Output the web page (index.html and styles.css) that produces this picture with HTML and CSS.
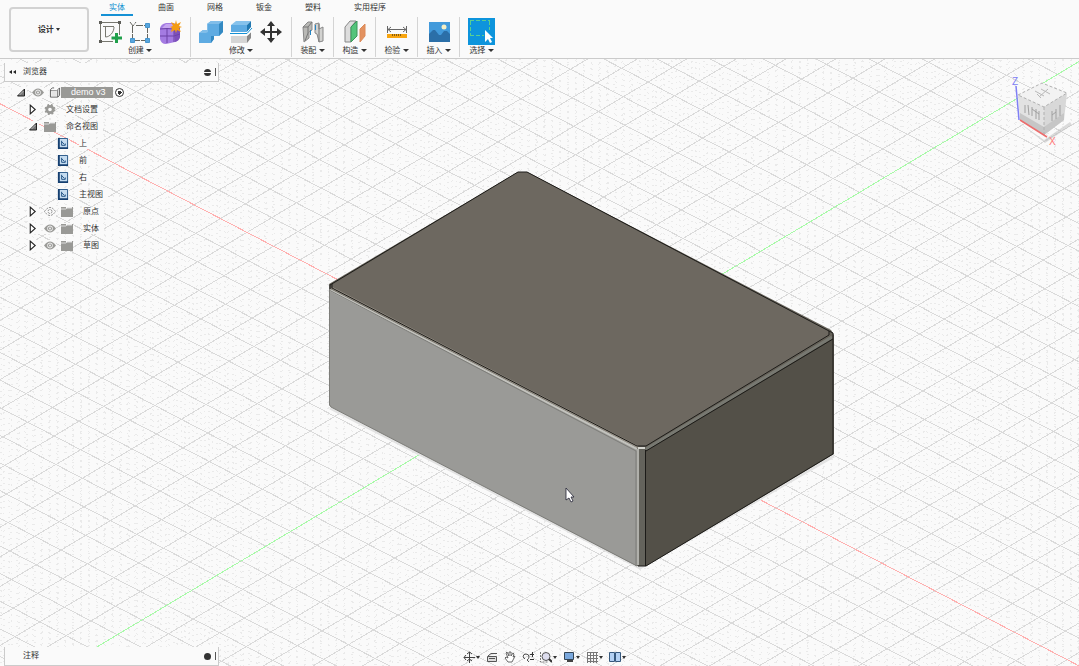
FILE: index.html
```html
<!DOCTYPE html>
<html lang="zh-CN">
<head>
    <meta charset="UTF-8">
    <meta name="viewport" content="width=device-width, initial-scale=1.0">
    <title>demo v3</title>
    <link rel="stylesheet" href="styles.css">
</head>
<body>

    <svg class="defs" width="0" height="0" aria-hidden="true">
        <symbol id="eye" viewBox="0 0 12 10">
            <path d="M0 5Q6-3 12 5Q6 13 0 5Z" fill="#9b9b98"/>
            <circle cx="6" cy="5" r="2.5" fill="none" stroke="#eee"/>
            <circle cx="6" cy="5" r="1" fill="#eee"/>
        </symbol>
        <symbol id="eye-off" viewBox="0 0 12 10">
            <path d="M.5 5Q6-3 11.500 5Q6 13 .5 5Z" fill="none" stroke="#8c8c8c" stroke-dasharray="2 1"/>
            <circle cx="6" cy="5" r="2" fill="none" stroke="#8c8c8c" stroke-dasharray="2 1"/>
        </symbol>
        <symbol id="folder" viewBox="0 0 12 11">
            <path d="M0 1H5V2H11V1H12V11H0Z" fill="#999996"/>
            <path d="M0 3H5L6 2H11" fill="none" stroke="#ddd"/>
        </symbol>
        <symbol id="closed" viewBox="0 0 8 10">
            <path d="M1.500 1V9L6 5Z" fill="#fff" stroke="#222"/>
        </symbol>
        <symbol id="open" viewBox="0 0 11 11">
            <path d="M9 2V9H2Z" fill="#777" stroke="#222"/>
            <path d="M4 8L8 4" stroke="#bbb"/>
        </symbol>
        <symbol id="view" viewBox="0 0 11 12">
            <path d="M.5 .5H10.500V11.500H.5Z" fill="#c5dcf0" stroke="#1d4d80"/>
            <path d="M1 0V12M0 11H11" stroke="#153f70" stroke-width="2"/>
            <path d="M4 3V8H8V6M4 4L7 7" fill="none" stroke="#1d4d80"/>
        </symbol>
    </svg>

    <header class="toolbar">
        <button class="workspace">设计 <i class="arrow"></i></button>
        <div class="ribbon">
            <nav class="tabs">
                <a href="#solid" class="active">实体</a>
                <a href="#surface">曲面</a>
                <a href="#mesh">网格</a>
                <a href="#sheet">钣金</a>
                <a href="#plastic">塑料</a>
                <a href="#utility">实用程序</a>
            </nav>
            <div class="groups">
                <div class="group">
                    <div class="tools">
                        <button aria-label="草图">
                            <svg viewBox="0 0 24 24">
                                <path d="M3 2.500H20M2.500 3V20M21.500 3V15M3 21.500H15" stroke="#77776f" fill="none"/>
                                <path d="M5 6.500H16M7.500 7V17C12 17 16 12 16 7" stroke="#77776f" fill="none"/>
                                <path d="M1 1H4V4H1ZM20 1H23V4H20ZM1 20H4V23H1Z" fill="#5d5d58"/>
                                <path d="M18.500 13V23M13.500 18H24" stroke="#20a04b" stroke-width="3"/>
                            </svg>
                        </button>
                        <button aria-label="创建形状">
                            <svg viewBox="0 0 24 24">
                                <path d="M2 2L5 6L8 2M4.500 6V20M8 5.500H18M19.500 6V19M5 20.500H19" stroke="#666660" fill="none" stroke-dasharray="7 1"/>
                                <path d="M17.500 3.500H21.500V7.500H17.500ZM2.500 18.500H6.500V22.500H2.500ZM17.500 18.500H21.500V22.500H17.500Z" fill="#57a6df" stroke="#4795cd"/>
                            </svg>
                        </button>
                        <button aria-label="创建造型">
                            <svg viewBox="0 0 24 24">
                                <path d="M2 8Q3 4 8 3H16L22 8V17Q21 21 17 22L8 24Q3 24 2 19Z" fill="#a47be2"/>
                                <path d="M16 10L22 7V17Q21 21 17 22Z" fill="#7c4fba"/>
                                <path d="M4 8L8 4H15L16 9Z" fill="#c6a5f0"/>
                                <path d="M2 9Q9 8 16 9M9 8V23M16 9V22M2 16H16L22 14" stroke="#6c42a6" fill="none"/>
                                <path d="M18 0L19 4L23 2L21 6L24 7L21 8L23 12L19 10L18 13L17 10L13 12L14 8L12 7L15 6L13 2L17 4Z" fill="#f39b12"/>
                            </svg>
                        </button>
                    </div>
                    <button class="menu">创建 <i class="arrow"></i></button>
                </div>
                <div class="group">
                    <div class="tools">
                        <button aria-label="拉伸">
                            <svg viewBox="0 0 24 24">
                                <path d="M0 13L4 10H8V4L12 1H24V12L20 16H15V19L12 23H0Z" fill="#5eabe2"/>
                                <path d="M0 13L4 10H8V4L12 1H24L20 4H9V12L7 13Z" fill="#80bde9"/>
                                <path d="M24 1V12L20 16V4ZM15 16V19L12 23V16Z" fill="#3389c2"/>
                            </svg>
                        </button>
                        <button aria-label="偏移面">
                            <svg viewBox="0 0 24 24">
                                <path d="M2 5L7 1H22L18 5Z" fill="#86c2ec"/>
                                <path d="M2 5H18V12H2Z" fill="#5eabe2"/>
                                <path d="M18 5L22 1V7L18 12Z" fill="#2178b0"/>
                                <path d="M2 16H18V23H2Z" fill="#d5d5d5"/>
                                <path d="M18 16L22 12V18L18 23Z" fill="#888"/>
                                <path d="M1 14H18L23 9" stroke="#fff" stroke-width="3" fill="none"/>
                                <path d="M1 13.500H18L23 8" stroke="#1591d5" fill="none"/>
                            </svg>
                        </button>
                        <button aria-label="移动">
                            <svg viewBox="0 0 24 24">
                                <path d="M12 3V21M3 12H21" stroke="#333" stroke-width="2"/>
                                <path d="M12 1L16 6H8ZM12 23L8 18H16ZM1 12L6 8V16ZM23 12L18 16V8Z" fill="#333"/>
                            </svg>
                        </button>
                    </div>
                    <button class="menu">修改 <i class="arrow"></i></button>
                </div>
                <div class="group single">
                    <div class="tools">
                        <button aria-label="联接">
                            <svg viewBox="0 0 24 24">
                                <path d="M2 7L7 2H11V10L8 12V18L3 22Z" fill="#b9b9b6" stroke="#888"/>
                                <path d="M14 4L18 3V9L22 7V21L18 22L16 14L14 13Z" fill="#d2d2d0" stroke="#888"/>
                                <path d="M2 7H7V13L4 21M7 7L11 2M18 4V22" fill="none" stroke="#777"/>
                                <path d="M9.500 15V10M14.500 10V5" stroke="#2585c4" fill="none"/>
                            </svg>
                        </button>
                    </div>
                    <button class="menu">装配 <i class="arrow"></i></button>
                </div>
                <div class="group single">
                    <div class="tools">
                        <button aria-label="偏移平面">
                            <svg viewBox="0 0 24 24">
                                <path d="M2 7L7 1H13L8 7V22H2Z" fill="#ddd" stroke="#888"/>
                                <path d="M8 7L14 1V16L8 22Z" fill="#54c47b" stroke="#3c955b"/>
                                <path d="M17 9L22 4V16L17 22Z" fill="#e39260" stroke="#dc8a58"/>
                            </svg>
                        </button>
                    </div>
                    <button class="menu">构造 <i class="arrow"></i></button>
                </div>
                <div class="group single">
                    <div class="tools">
                        <button aria-label="测量">
                            <svg viewBox="0 0 24 24">
                                <path d="M2.500 6V13M21.500 6V13M3 9.500H21M6 7L3 9.500L6 12M18 7L21 9.500L18 12" fill="none" stroke="#666"/>
                                <path d="M2 14H22V18H2Z" fill="#f8a50f"/>
                                <path d="M7.500 14V16M9.500 14V16M11.500 14V16M13.500 14V16M15.500 14V16" stroke="#855b0c"/>
                            </svg>
                        </button>
                    </div>
                    <button class="menu">检验 <i class="arrow"></i></button>
                </div>
                <div class="group single">
                    <div class="tools">
                        <button aria-label="插入图像">
                            <svg viewBox="0 0 24 24">
                                <path d="M2 2H23V22H2Z" fill="#429adb"/>
                                <path d="M2 14L6 10H8L12 15H14L17 11H20L23 14V22H2Z" fill="#2b6fa8"/>
                                <circle cx="17" cy="7" r="2.500" fill="#f5efc6"/>
                            </svg>
                        </button>
                    </div>
                    <button class="menu">插入 <i class="arrow"></i></button>
                </div>
                <div class="group">
                    <div class="tools">
                        <button aria-label="选择" class="selected">
                            <svg viewBox="0 0 27 27">
                                <path d="M2 2.500H22M2 17.500H16M2.500 3V17M21.500 3V12" stroke="#59cf91" stroke-dasharray="4 2" fill="none"/>
                                <path d="M17 12V24L20 21L22 25L24 24L22 20H25Z" fill="#fff"/>
                            </svg>
                        </button>
                    </div>
                    <button class="menu">选择 <i class="arrow"></i></button>
                </div>
            </div>
        </div>
    </header>

    <main class="viewport">
        <svg class="scene" viewBox="0 59 1079 607" preserveAspectRatio="xMidYMid slice">
            <g id="grid" shape-rendering="crispEdges"></g>
            <g class="model">
                <path class="shadow" d="M330 408L640 568L834 456"/>
                <path fill="#656158" d="M329 284L518 172H527L831 330L834 335V454L646 566H637L329 405Z"/>
                <path fill="#6d6860" d="M332 285L518 172H527L829 331V336L646 446H637L332 288Z"/>
                <path fill="#9a9a97" d="M329 290L637 450V566L331 407L329 403Z"/>
                <path fill="#535048" d="M646 450L833 338V454L646 566Z"/>
                <path fill="#64635c" d="M637 448H646V566H637Z"/>
                <path stroke="#999389" stroke-width="2" d="M332 288L638 447"/>
                <path stroke="#c3c3be" stroke-width="2" d="M330 290L637 449"/>
                <path stroke="#777871" stroke-width="3" d="M646 449L832 337"/>
                <path stroke="#b0b0ab" stroke-width="2" d="M638 449V565"/>
                <path stroke="#d4d4ce" stroke-width="2" d="M638 448H645"/>
                <path class="soft" d="M329 290L636 451V566M329.500 285V405L331 407L637 566"/>
                <path class="edge" d="M330 289V285L518 172H527L829 331L833 333V454L646 566H638M332 284V288L637 446H646L829 335V331M646 451L833 339M645.500 450V566"/>
            </g>
            <path d="M566 488V500L569 498L571 502L573 501L571 497H574Z" fill="#fff" stroke="#223" stroke-width=".8"/>
        </svg>

        <aside class="browser">
            <div class="panel">
                <svg class="rewind" viewBox="0 0 8 6"><path d="M4 1V5L1 3ZM8 1V5L5 3Z" fill="#222"/></svg>
                <h2>浏览器</h2>
                <button aria-label="折叠浏览器" class="pin"><i></i></button>
            </div>
            <ul class="tree">
                <li>
                    <button aria-label="收起"><svg><use href="#open"/></svg></button>
                    <svg><use href="#eye"/></svg>
                    <span class="document">
                        <svg viewBox="0 0 12 12"><path d="M1 3L3 1H5M1 3V11H9L11 9V1L9 3V11M1 4H8" fill="#fff" stroke="#555"/><path d="M2 4H8V10H2Z" fill="#e5e5e5"/></svg>
                        <b>demo v3</b>
                    </span>
                    <input type="radio" checked aria-label="激活 demo v3">
                </li>
                <li class="sub">
                    <button aria-label="展开"><svg><use href="#closed"/></svg></button>
                    <svg viewBox="0 0 12 12"><circle cx="6" cy="6" r="3.500" fill="none" stroke="#999996" stroke-width="3"/><circle cx="6" cy="6" r="5" fill="none" stroke="#999996" stroke-width="2" stroke-dasharray="2 2"/></svg>
                    <span>文档设置</span>
                </li>
                <li class="sub">
                    <button aria-label="收起"><svg><use href="#open"/></svg></button>
                    <svg><use href="#folder"/></svg>
                    <span>命名视图</span>
                </li>
                <li class="leaf"><svg><use href="#view"/></svg><span>上</span></li>
                <li class="leaf"><svg><use href="#view"/></svg><span>前</span></li>
                <li class="leaf"><svg><use href="#view"/></svg><span>右</span></li>
                <li class="leaf"><svg><use href="#view"/></svg><span>主视图</span></li>
                <li class="sub">
                    <button aria-label="展开"><svg><use href="#closed"/></svg></button>
                    <svg><use href="#eye-off"/></svg>
                    <svg><use href="#folder"/></svg>
                    <span>原点</span>
                </li>
                <li class="sub">
                    <button aria-label="展开"><svg><use href="#closed"/></svg></button>
                    <svg><use href="#eye"/></svg>
                    <svg><use href="#folder"/></svg>
                    <span>实体</span>
                </li>
                <li class="sub">
                    <button aria-label="展开"><svg><use href="#closed"/></svg></button>
                    <svg><use href="#eye"/></svg>
                    <svg><use href="#folder"/></svg>
                    <span>草图</span>
                </li>
            </ul>
        </aside>

        <svg class="viewcube" viewBox="0 0 66 80">
            <path d="M9 52L36 71L62 53L64 56L37 74Z" fill="#bbb" opacity=".5"/>
            <path d="M10 26L34 14L59 24L36 38Z" fill="#f2f2f2"/>
            <path d="M10 26L36 38V66L12 51Z" fill="#e2e2e2"/>
            <path d="M36 38L59 24L56 51L36 66Z" fill="#d8d8d8"/>
            <path d="M12 44L36 58V66L12 51ZM36 58L56 44V51L36 66Z" fill="#c6c6c6"/>
            <path d="M10 26L34 14L59 24L36 38ZM36 38V66" fill="none" stroke="#b0b0b0" stroke-dasharray="3 2"/>
            <path d="M27 22L36 27M33 20L42 25M31 28L40 20M29 25L33 29" stroke="#b8b8b8" fill="none"/>
            <path d="M17 36V44M20 36L21 46M24 38V47M28 40V50M24 40L31 45M31 42V51M44 42V52M48 40V50M52 36V47M44 46L48 43" stroke="#a0a0a0" fill="none"/>
            <path d="M8 17L11 51" stroke="#8080f5" stroke-width="1.500"/>
            <path d="M12 51L39 68" stroke="#ed6c6c" stroke-width="1.500"/>
            <text x="4" y="16" fill="#8080f5">Z</text>
            <text x="41" y="76" fill="#ff7777">X</text>
        </svg>

        <section class="panel comments">
            <h2>注释</h2>
            <button aria-label="展开注释" class="pin dot"><i></i></button>
        </section>

        <nav class="navbar">
            <button aria-label="动态观察"><svg viewBox="0 0 12 12"><path d="M6.500 1V12M1 6.500H12M3 4L1 6.500L3 9M4 3L6.500 1L9 3M4 10L6.500 8L9 10" fill="none" stroke="#444"/></svg><i class="arrow"></i></button>
            <button aria-label="观察方向"><svg viewBox="0 0 12 12"><path d="M1.500 5.500H10.500V10.500H1.500ZM3 7.500H9M2 5L5 2.500H11" fill="#ddd" stroke="#555"/></svg></button>
            <button aria-label="平移"><svg viewBox="0 0 12 12"><path d="M4 11L1 7L2 6L4 7L2 2L3 1L5 5V1H7V5L9 2L10 3L9 6L11 5L9 9L8 11Z" fill="#fff" stroke="#444" stroke-width=".8"/></svg></button>
            <button aria-label="缩放"><svg viewBox="0 0 12 12"><path d="M1 6Q1 3 4 3Q7 3 7 6Q7 8 5 9L7 11M1 6L3 8" fill="none" stroke="#555"/><path d="M8 3.500H12M10.500 1V6M8 8.500H12" stroke="#333"/></svg></button>
            <button aria-label="窗口缩放"><svg viewBox="0 0 12 12"><circle cx="6" cy="5.500" r="4" fill="#dde" stroke="#555"/><path d="M9 8L12 11" stroke="#333" stroke-width="2"/><path d="M.5 1V11H8" fill="none" stroke="#777" stroke-dasharray="2 1"/></svg><i class="arrow"></i></button>
            <button aria-label="显示设置"><svg viewBox="0 0 12 12"><path d="M1.500 1.500H10.500V8.500H1.500Z" fill="#7aa8dd" stroke="#345"/><path d="M4 10H10" stroke="#444" stroke-width="2"/></svg><i class="arrow"></i></button>
            <button aria-label="栅格"><svg viewBox="0 0 12 12"><path d="M1 1.500H12M1 4.500H12M1 7.500H12M1 10.500H12M1.500 1V12M4.500 1V12M7.500 1V12M10.500 1V12" stroke="#777"/></svg><i class="arrow"></i></button>
            <button aria-label="视口"><svg viewBox="0 0 12 12"><path d="M.5 1.500H5.500V10.500H.5ZM6.500 1.500H11.500V10.500H6.500Z" fill="#b4d1f3" stroke="#36587d"/></svg><i class="arrow"></i></button>
        </nav>
    </main>

    <script>

        (function(){

            let grid = document.querySelector('#grid');
            let origin = { x: 538, y: 384 };
            let reach = 1200;

            // slope of each family of lines and the vertical distance between two of them
            let families = [
                { slope: 0.521, step: 27.64, axis: 'axis-x' },
                { slope: -0.596, step: 29.55, axis: 'axis-y' }
            ];

            function addLine(family, offset, name) {
                let line = document.createElementNS('http://www.w3.org/2000/svg', 'line');
                let y = origin.y + offset;
                line.setAttribute('x1', origin.x - reach);
                line.setAttribute('y1', y - reach * family.slope);
                line.setAttribute('x2', origin.x + reach);
                line.setAttribute('y2', y + reach * family.slope);
                line.setAttribute('class', name);
                grid.appendChild(line);
            }

            ['minor', 'major'].forEach(function(kind){
                families.forEach(function(family){
                    for (let i = -175; i <= 175; i++) {
                        if ((i % 5 === 0) === (kind === 'major')) {
                            addLine(family, i * family.step / 5, kind);
                        }
                    }
                });
            });

            families.forEach(function(family){
                addLine(family, 0, family.axis);
            });

        })();

    </script>

</body>
</html>
```
FILE: styles.css
```css
:root {
    --paper:#fafafa;
    --line:#cbcbcb;
    --ink:#333;
}

* {
    box-sizing: border-box;
}

body {
    margin:0;
    height:100vh;
    display: flex;
    flex-direction: column;
    overflow: hidden;
    background-color: var(--paper);
    color:var(--ink);
    font-family: "Liberation Sans", "Noto Sans CJK SC", sans-serif;
    font-size: 8px;
    line-height: 10px;
}

button {
    border: 0;
    padding: 0;
    background: none;
    color:inherit;
    font: inherit;
}

svg {
    display: block;
    flex-shrink: 0;
}

.defs {
    position: absolute;
}

.arrow {
    display: inline-block;
    border: 2px solid transparent;
    border-top: 3px solid var(--ink);
    border-bottom: 0;
    vertical-align: middle;
}

/* toolbar */
.toolbar {
    display: flex;
    border-bottom: 1px solid var(--line);
    padding-left: 9px;
}

.workspace {
    width:80px;
    height:45px;
    margin:7px 0 6px;
    border:2px solid #d2d2d2;
    border-radius: 4px;
    font-weight: bold;
}

.tabs {
    display: flex;
    gap:17px;
    padding:3px 0 0 12px;
}

.tabs a {
    padding:0 8px;
    height:13px;
    color:var(--ink);
    text-decoration: none;
}

.tabs a.active {
    color:#0a8fd0;
    border-bottom: 2px solid #1591d5;
}

.groups {
    display: flex;
    height:40px;
    margin:1px 0 0 1px;
}

.group {
    display: flex;
    flex-direction: column;
    align-items: center;
    padding:0 8px;
    border-right: 1px solid #d4d4d4;
}

.group:last-child {
    border: 0;
}

.group.single {
    width:42px;
}

.tools {
    display: flex;
    align-items: center;
    gap:6px;
    height:29px;
}

.tools svg {
    width:24px;
    height:24px;
}

.tools .selected svg {
    width:27px;
    height:27px;
    background-color: #0d94dc;
}

.menu {
    white-space: nowrap;
}

.menu .arrow {
    border-left-width: 3px;
    border-right-width: 3px;
}

/* viewport */
.viewport {
    position: relative;
    flex:1;
    min-height: 0;
}

.scene {
    width:100%;
    height:100%;
}

.minor {
    stroke:#eaeaea;
    stroke-dasharray: 2 7;
}

.major {
    stroke:#dadada;
}

.axis-x {
    stroke:#ffb0b0;
}

.axis-y {
    stroke:#a8faa8;
}

.model path {
    stroke-linejoin: round;
}

.model .shadow {
    fill:none;
    stroke:#e2e2e2;
    stroke-width: 3px;
}

.model .soft {
    fill:none;
    stroke:#7d7d79;
}

.model .edge {
    fill:none;
    stroke:#1c1b18;
}

.browser {
    position: absolute;
    top:4px;
    left:4px;
    width:215px;
}

.panel {
    display: flex;
    align-items: center;
    height:19px;
    padding:0 2px 0 3px;
    background-color: var(--paper);
    border: solid var(--line);
    border-width: 0 1px 1px;
}

.panel h2 {
    flex:1;
    margin:0;
    font-size: 8px;
    font-weight: normal;
}

.rewind {
    width:8px;
    height:6px;
    margin-right: 7px;
}

.pin {
    display: flex;
    align-items: center;
    gap:4px;
}

.pin::before {
    content: "";
    width:7px;
    height:7px;
    border-radius: 50%;
    background: linear-gradient(#333 3px, #fff 3px, #fff 4px, #333 4px);
}

.pin.dot::before {
    background: #333;
}

.pin i {
    width:1px;
    height:8px;
    background-color: #555;
}

.comments {
    position: absolute;
    left:4px;
    bottom:0;
    width:215px;
    padding-left: 18px;
}

.tree {
    list-style: none;
    margin:2px 0 0;
    padding:0;
}

.tree li {
    display: flex;
    align-items: center;
    gap:5px;
    height:17px;
    padding-left: 11px;
}

.tree li.sub {
    padding-left: 23px;
}

.tree li.leaf {
    padding-left: 53px;
}

.tree svg {
    width:12px;
    height:11px;
    background-color: var(--paper);
}

.tree li > span:last-child {
    margin-left: 5px;
    padding-right: 5px;
    background-color: var(--paper);
}

.tree .document {
    display: flex;
    margin-right: -3px;
    background-color: #999996;
}

.tree .document b {
    padding:0 7px 0 10px;
    color:#fff;
    font-size: 9px;
    line-height: 11px;
    font-weight: normal;
}

.tree input {
    appearance: none;
    width:9px;
    height:9px;
    margin:0;
    border:1px solid #333;
    border-radius: 50%;
    background: radial-gradient(#333 2px, #fff 2px);
}

.viewcube {
    position: absolute;
    top:10px;
    right:5px;
    width:66px;
    height:80px;
    font-size: 10px;
}

.navbar {
    position: absolute;
    left:0;
    right:0;
    bottom:3px;
    display: flex;
    justify-content: center;
    gap:6px;
    padding-left: 10px;
}

.navbar button {
    display: flex;
    align-items: center;
    gap:1px;
}

.navbar svg {
    width:12px;
    height:12px;
}
```
